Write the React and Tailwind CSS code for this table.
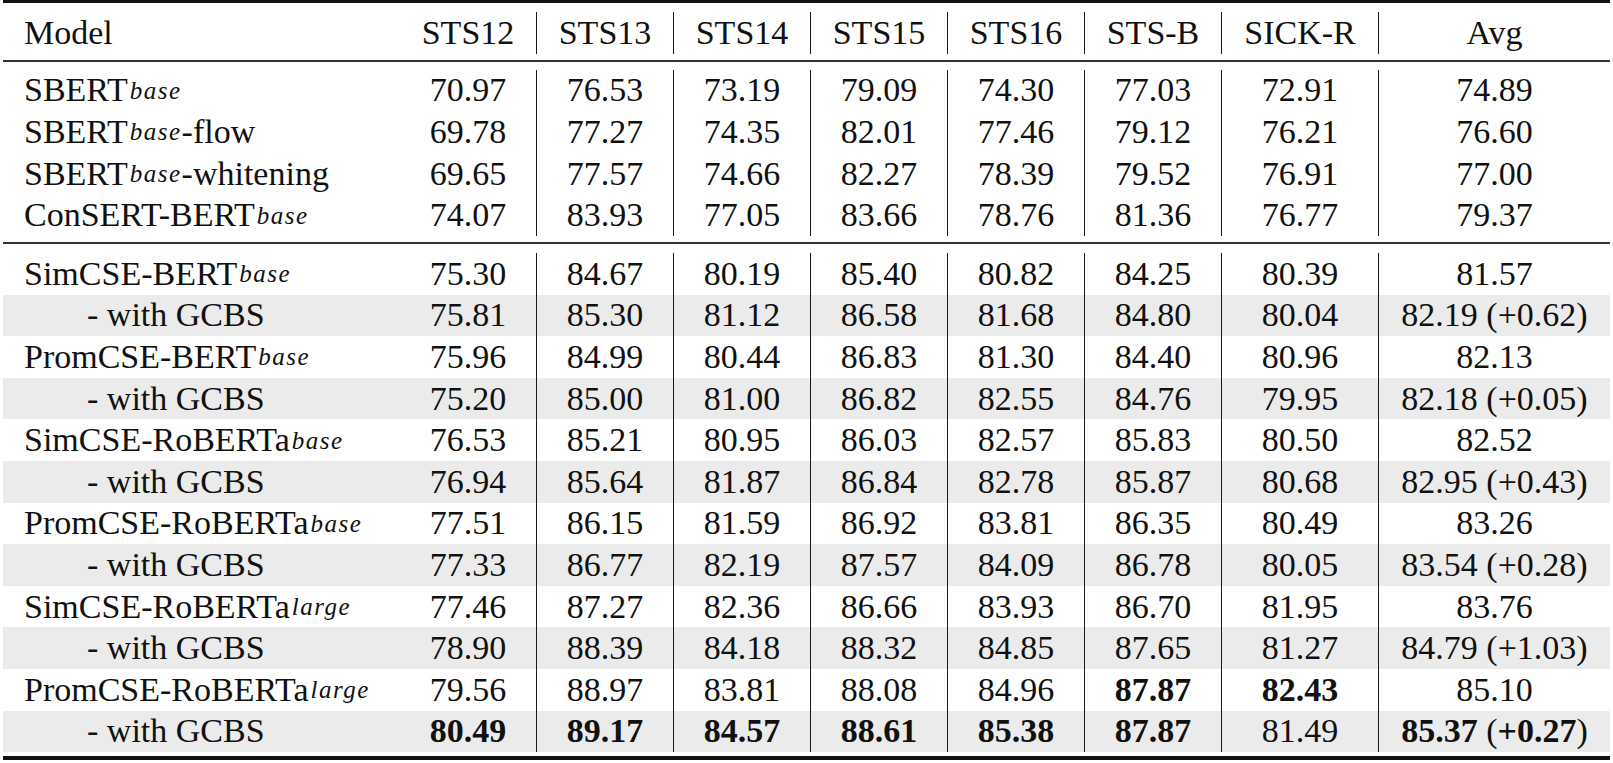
const grid = "grid grid-cols-[397px_137px_137px_137px_137px_137px_137px_157px_231px]";

const Sub = ({ children }) => (
    <span className="italic text-[25px] tracking-[1.5px] align-[-4px] ml-[2px]">{children}</span>
);

const head = ["STS12", "STS13", "STS14", "STS15", "STS16", "STS-B", "SICK-R", "Avg"];

const groupA = [
    { name: <>SBERT<Sub>base</Sub></>, vals: ["70.97", "76.53", "73.19", "79.09", "74.30", "77.03", "72.91", "74.89"] },
    { name: <>SBERT<Sub>base</Sub>-flow</>, vals: ["69.78", "77.27", "74.35", "82.01", "77.46", "79.12", "76.21", "76.60"] },
    { name: <>SBERT<Sub>base</Sub>-whitening</>, vals: ["69.65", "77.57", "74.66", "82.27", "78.39", "79.52", "76.91", "77.00"] },
    { name: <>ConSERT-BERT<Sub>base</Sub></>, vals: ["74.07", "83.93", "77.05", "83.66", "78.76", "81.36", "76.77", "79.37"] },
];

const groupB = [
    { name: <>SimCSE-BERT<Sub>base</Sub></>, vals: ["75.30", "84.67", "80.19", "85.40", "80.82", "84.25", "80.39", "81.57"] },
    { gcbs: true, vals: ["75.81", "85.30", "81.12", "86.58", "81.68", "84.80", "80.04", "82.19 (+0.62)"] },
    { name: <>PromCSE-BERT<Sub>base</Sub></>, vals: ["75.96", "84.99", "80.44", "86.83", "81.30", "84.40", "80.96", "82.13"] },
    { gcbs: true, vals: ["75.20", "85.00", "81.00", "86.82", "82.55", "84.76", "79.95", "82.18 (+0.05)"] },
    { name: <>SimCSE-RoBERTa<Sub>base</Sub></>, vals: ["76.53", "85.21", "80.95", "86.03", "82.57", "85.83", "80.50", "82.52"] },
    { gcbs: true, vals: ["76.94", "85.64", "81.87", "86.84", "82.78", "85.87", "80.68", "82.95 (+0.43)"] },
    { name: <>PromCSE-RoBERTa<Sub>base</Sub></>, vals: ["77.51", "86.15", "81.59", "86.92", "83.81", "86.35", "80.49", "83.26"] },
    { gcbs: true, vals: ["77.33", "86.77", "82.19", "87.57", "84.09", "86.78", "80.05", "83.54 (+0.28)"] },
    { name: <>SimCSE-RoBERTa<Sub>large</Sub></>, vals: ["77.46", "87.27", "82.36", "86.66", "83.93", "86.70", "81.95", "83.76"] },
    { gcbs: true, vals: ["78.90", "88.39", "84.18", "88.32", "84.85", "87.65", "81.27", "84.79 (+1.03)"] },
    { name: <>PromCSE-RoBERTa<Sub>large</Sub></>, vals: ["79.56", "88.97", "83.81", "88.08", "84.96", "87.87", "82.43", "85.10"], bold: [5, 6] },
    {
        gcbs: true,
        vals: ["80.49", "89.17", "84.57", "88.61", "85.38", "87.87", "81.49",
            <span><b>85.37</b> (<b>+0.27</b>)</span>],
        bold: [0, 1, 2, 3, 4, 5],
    },
];

const Row = ({ name, vals, shaded, bold = [] }) => (
    <div className={`${grid} h-[41.6px] ${shaded ? "bg-[#ebebeb]" : ""}`}>
        <div className="flex items-center pl-[21px] whitespace-nowrap">{name}</div>
        {vals.map((v, i) => (
            <div
                key={i}
                className={`flex items-center justify-center whitespace-nowrap ${i < 7 ? "border-r border-[#1a1a1a]" : ""} ${bold.includes(i) ? "font-bold" : ""}`}
            >
                {v}
            </div>
        ))}
    </div>
);

export default function App() {
    return (
        <div className="w-[1613px] h-[763px] bg-white px-[3px] font-['Liberation_Serif',serif] text-[34px] leading-none text-[#111]">
            <div className="h-[3px] bg-[#111]" />
            <div className="pt-[9px] pb-[6px]">
                <Row name="Model" vals={head} />
            </div>
            <div className="h-[2px] bg-[#333]" />
            <div className="pt-[8px] pb-[6px]">
                {groupA.map((r, i) => (
                    <Row key={i} name={r.name} vals={r.vals} />
                ))}
            </div>
            <div className="h-[2px] bg-[#333]" />
            <div className="pt-[9px] pb-[4px]">
                {groupB.map((r, i) => (
                    <Row
                        key={i}
                        name={r.gcbs ? <span className="ml-[63px]">- with GCBS</span> : r.name}
                        vals={r.vals}
                        shaded={r.gcbs}
                        bold={r.bold}
                    />
                ))}
            </div>
            <div className="h-[4px] bg-[#111]" />
        </div>
    );
}
